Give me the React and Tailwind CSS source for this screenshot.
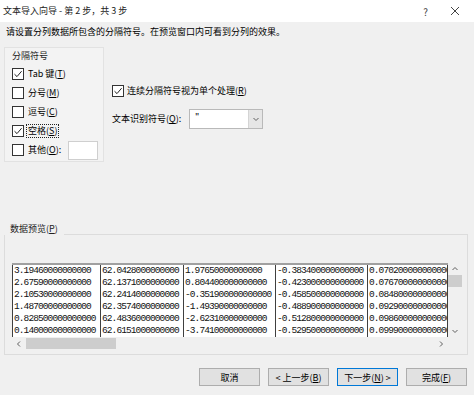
import React from 'react'

const font = { fontFamily: '"Noto Sans CJK SC", "Noto Sans", sans-serif' }

const columns = [
  { w: 'w-[88px]', vals: ['3.19460000000000', '2.67590000000000', '2.10530000000000', '1.48700000000000', '0.828500000000000', '0.140000000000000'] },
  { w: 'w-[83px]', vals: ['62.0428000000000', '62.1371000000000', '62.2414000000000', '62.3574000000000', '62.4836000000000', '62.6151000000000'] },
  { w: 'w-[92px]', vals: ['1.97650000000000', '0.804400000000000', '-0.351900000000000', '-1.49390000000000', '-2.62310000000000', '-3.74100000000000'] },
  { w: 'w-[92px]', vals: ['-0.383400000000000', '-0.423000000000000', '-0.458500000000000', '-0.488900000000000', '-0.512800000000000', '-0.529500000000000'] },
  { w: 'w-[81px]', vals: ['0.0702000000000000', '0.0767000000000000', '0.0848000000000000', '0.0929000000000000', '0.0986000000000000', '0.0999000000000000'] },
]

const Check = ({ checked }) => (
  <span className="w-[12px] h-[12px] border border-[#333] bg-white flex items-center justify-center shrink-0">
    {checked && (
      <svg width="10" height="10" viewBox="0 0 10 10">
        <path d="M1.5 5.2 L4 7.6 L8.6 2.2" fill="none" stroke="#222" strokeWidth="1" />
      </svg>
    )}
  </span>
)

const Option = ({ checked, label, hot, focus, children }) => (
  <div className="h-[18px] flex items-center">
    <Check checked={checked} />
    <span className={'ml-[2px] leading-[12px] px-[1px] ' + (focus ? 'border border-dotted border-[#222]' : 'border border-transparent')}>
      {label}(<u>{hot}</u>){children ? ':' : ''}
    </span>
    {children}
  </div>
)

const Btn = ({ children, primary }) => (
  <button
    className={
      'w-[61px] h-[18px] bg-[#e1e1e1] text-[9px] leading-none text-black border ' +
      (primary ? 'border-[#0078d7]' : 'border-[#adadad]')
    }
  >
    {children}
  </button>
)

const Chevron = ({ d }) => (
  <svg width="8" height="8" viewBox="0 0 8 8">
    <path d={d} fill="none" stroke="#606060" strokeWidth="1" />
  </svg>
)

export default function App() {
  return (
    <div className="w-[474px] h-[395px] bg-white flex flex-col text-[9px] text-black overflow-hidden" style={font}>
      {/* title bar */}
      <div className="h-[22px] flex items-center pl-[3px] pr-[14px] bg-white">
        <span className="flex-1 text-[9px] text-[#222]">文本导入向导 - 第 2 步，共 3 步</span>
        <span className="text-[10px] text-[#444] mr-[22px]">?</span>
        <svg width="10" height="10" viewBox="0 0 10 10">
          <path d="M1 1 L9 9 M9 1 L1 9" stroke="#444" strokeWidth="1" />
        </svg>
      </div>

      <div className="flex-1 bg-[#f0f0f0] flex flex-col">
        <div className="pl-[6px] pt-[4px] leading-[12px]">请设置分列数据所包含的分隔符号。在预览窗口内可看到分列的效果。</div>

        <div className="flex mt-[9px]">
          {/* delimiter group */}
          <div className="ml-[4px] w-[100px] h-[115px] border border-[#e2e2e2] bg-[#f3f3f3] pl-[7px] pt-[2px]">
            <div className="leading-[12px] mb-[3px] text-[#222]">分隔符号</div>
            <div className="flex flex-col gap-[1px]">
              <Option checked label="Tab 键" hot="T" />
              <Option label="分号" hot="M" />
              <Option label="逗号" hot="C" />
              <Option checked label="空格" hot="S" focus />
              <Option label="其他" hot="O">
                <span className="ml-[5px] w-[30px] h-[19px] bg-white border border-[#cfcfcf]" />
              </Option>
            </div>
          </div>

          {/* right options */}
          <div className="ml-[8px] flex flex-col">
            <div className="mt-[38px] h-[12px] flex items-center">
              <Check checked />
              <span className="ml-[3px]">连续分隔符号视为单个处理(<u>R</u>)</span>
            </div>
            <div className="mt-[12px] flex items-center">
              <span className="w-[77px]">文本识别符号(<u>Q</u>):</span>
              <div className="w-[74px] h-[20px] bg-white border border-[#b9b9b9] flex">
                <span className="flex-1 pl-[5px] pt-[1px] leading-[12px]">"</span>
                <span className="w-[14px] bg-[#e6e6e6] border-l border-[#d4d4d4] flex items-center justify-center">
                  <Chevron d="M1.5 3 L4 5.5 L6.5 3" />
                </span>
              </div>
            </div>
          </div>
        </div>

        {/* preview */}
        <div className="mx-[4px] w-[464px] mt-[61px]">
          <div className="flex h-[12px]">
            <span className="pl-[6px] leading-[12px] pr-[6px] text-[#222]">数据预览(<u>P</u>)</span>
            <span className="flex-1 border-b border-[#dcdcdc]" />
          </div>
          <div className="border-x border-b border-[#dcdcdc] pt-[28px] pl-[7px] pb-[4px]">
            <div className="w-[450px] flex flex-col">
              <div className="flex">
                <div className="w-[436px] bg-white border-t-2 border-[#a0a0a0] flex overflow-hidden">
                  {columns.map((c, i) => (
                    <div
                      key={i}
                      className={c.w + ' shrink-0 border-l border-[#404040] overflow-hidden' + (i === 4 ? ' border-r' : '')}
                      style={{ fontFamily: '"Liberation Mono", monospace' }}
                    >
                      {c.vals.map((v) => (
                        <div key={v} className="h-[12px] leading-[12px] text-[9.5px] tracking-[-0.9px] text-[#111] whitespace-nowrap pl-[1px]">
                          {v}
                        </div>
                      ))}
                    </div>
                  ))}
                </div>
                <div className="w-[14px] bg-[#f0f0f0] flex flex-col items-center">
                  <div className="h-[12px] flex items-center justify-center">
                    <Chevron d="M1.5 5 L4 2.5 L6.5 5" />
                  </div>
                  <div className="w-[14px] h-[12px] bg-[#cdcdcd]" />
                  <div className="flex-1" />
                  <div className="h-[12px] flex items-center justify-center">
                    <Chevron d="M1.5 3 L4 5.5 L6.5 3" />
                  </div>
                </div>
              </div>
              <div className="flex h-[13px]">
                <div className="w-[436px] flex items-center">
                  <span className="w-[14px] flex justify-center">
                    <Chevron d="M5 1.5 L2.5 4 L5 6.5" />
                  </span>
                  <span className="w-[90px] h-[11px] bg-[#cdcdcd]" />
                  <span className="flex-1" />
                  <span className="w-[14px] flex justify-center">
                    <Chevron d="M3 1.5 L5.5 4 L3 6.5" />
                  </span>
                </div>
                <div className="w-[14px]" />
              </div>
            </div>
          </div>
        </div>

        {/* buttons */}
        <div className="mt-[13px] flex justify-end gap-[8px] pr-[7px]">
          <Btn>取消</Btn>
          <Btn>&lt; 上一步(<u>B</u>)</Btn>
          <Btn primary>下一步(<u>N</u>) &gt;</Btn>
          <Btn>完成(<u>F</u>)</Btn>
        </div>
      </div>
    </div>
  )
}
